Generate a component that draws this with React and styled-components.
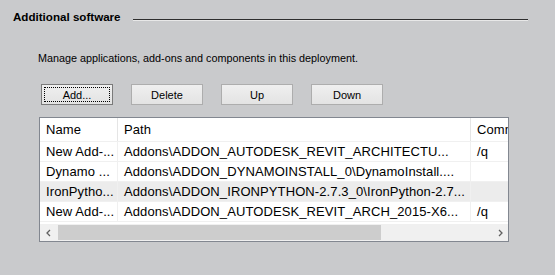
import React from 'react';
import styled, { createGlobalStyle } from 'styled-components';

const GlobalStyle = createGlobalStyle`
  html, body {
    margin: 0;
    padding: 0;
    background: #c9cacc;
  }
`;

const Page = styled.div`
  width: 555px;
  height: 275px;
  background: #c9cacc;
  display: flex;
  flex-direction: column;
  font-family: "Liberation Sans", Arial, sans-serif;
  color: #000;
  overflow: hidden;
`;

const Header = styled.div`
  display: flex;
  align-items: flex-end;
  padding: 10px 27px 0 13px;
`;

const Title = styled.span`
  font-weight: bold;
  font-size: 11.6px;
  line-height: 14px;
  white-space: nowrap;
`;

const Rule = styled.div`
  flex: 1;
  height: 1px;
  margin: 0 0 3px 12px;
  background: #2e2e2e;
  border-bottom: 1px solid #e8e8e8;
`;

const Description = styled.p`
  margin: 27px 0 0 38px;
  font-size: 10.8px;
  line-height: 14px;
`;

const Buttons = styled.div`
  display: flex;
  gap: 18px;
  margin: 19px 0 0 41px;
`;

const Button = styled.button`
  position: relative;
  width: 72px;
  height: 21px;
  padding: 0;
  border: 1px solid ${(p) => (p.focused ? '#7a7a7a' : '#adadad')};
  background: linear-gradient(#efefef, #e3e3e3);
  font-family: "Liberation Sans", Arial, sans-serif;
  font-size: 11px;
  color: #000;
  &::after {
    content: '';
    display: ${(p) => (p.focused ? 'block' : 'none')};
    position: absolute;
    inset: 2px;
    border: 1px dotted #000;
  }
`;

const List = styled.div`
  width: 468px;
  height: 123px;
  margin: 12px 0 0 39px;
  border: 1px solid #828790;
  background: #fff;
  display: flex;
  flex-direction: column;
`;

const Viewport = styled.div`
  flex: 1;
  overflow: hidden;
`;

const Row = styled.div`
  display: flex;
  height: ${(p) => (p.head ? 24 : 20)}px;
  width: 560px;
  background: ${(p) => (p.selected ? '#ececec' : '#fff')};
  border-bottom: 1px solid #f0f0f0;
  box-sizing: border-box;
  font-size: 13px;
  letter-spacing: 0.1px;
`;

const Cell = styled.div`
  width: ${(p) => p.w}px;
  flex: none;
  box-sizing: border-box;
  padding-left: 6px;
  border-right: 1px solid ${(p) => (p.head ? '#e5e5e5' : '#f0f0f0')};
  display: flex;
  align-items: center;
  white-space: nowrap;
  overflow: hidden;
`;

const Scrollbar = styled.div`
  height: 17px;
  background: #f0f0f0;
  display: flex;
  align-items: center;
`;

const Arrow = styled.div`
  width: 17px;
  height: 17px;
  display: flex;
  align-items: center;
  justify-content: center;
  flex: none;
`;

const Track = styled.div`
  flex: 1;
  height: 15px;
  display: flex;
`;

const Thumb = styled.div`
  width: 323px;
  margin-left: 1px;
  background: #cdcdcd;
`;

const Chevron = ({ dir }) => (
  <svg width="8" height="8" viewBox="0 0 8 8">
    <path
      d={dir === 'left' ? 'M5 1 L2 4 L5 7' : 'M3 1 L6 4 L3 7'}
      fill="none"
      stroke="#606060"
      strokeWidth="1.3"
    />
  </svg>
);

const cols = [78, 353, 129];

const rows = [
  ['New Add-...', 'Addons\\ADDON_AUTODESK_REVIT_ARCHITECTU...', '/q'],
  ['Dynamo ...', 'Addons\\ADDON_DYNAMOINSTALL_0\\DynamoInstall....', ''],
  ['IronPytho...', 'Addons\\ADDON_IRONPYTHON-2.7.3_0\\IronPython-2.7...', ''],
  ['New Add-...', 'Addons\\ADDON_AUTODESK_REVIT_ARCH_2015-X6...', '/q'],
];

const App = () => (
  <Page>
    <GlobalStyle />
    <Header>
      <Title>Additional software</Title>
      <Rule />
    </Header>
    <Description>Manage applications, add-ons and components in this deployment.</Description>
    <Buttons>
      <Button focused>Add...</Button>
      <Button>Delete</Button>
      <Button>Up</Button>
      <Button>Down</Button>
    </Buttons>
    <List>
      <Viewport>
        <Row head>
          <Cell head w={cols[0]}>Name</Cell>
          <Cell head w={cols[1]}>Path</Cell>
          <Cell head w={cols[2]}>Command line</Cell>
        </Row>
        {rows.map((r, i) => (
          <Row key={i} selected={i === 2}>
            {r.map((c, j) => (
              <Cell key={j} w={cols[j]}>{c}</Cell>
            ))}
          </Row>
        ))}
      </Viewport>
      <Scrollbar>
        <Arrow><Chevron dir="left" /></Arrow>
        <Track><Thumb /></Track>
        <Arrow><Chevron dir="right" /></Arrow>
      </Scrollbar>
    </List>
  </Page>
);

export default App;
